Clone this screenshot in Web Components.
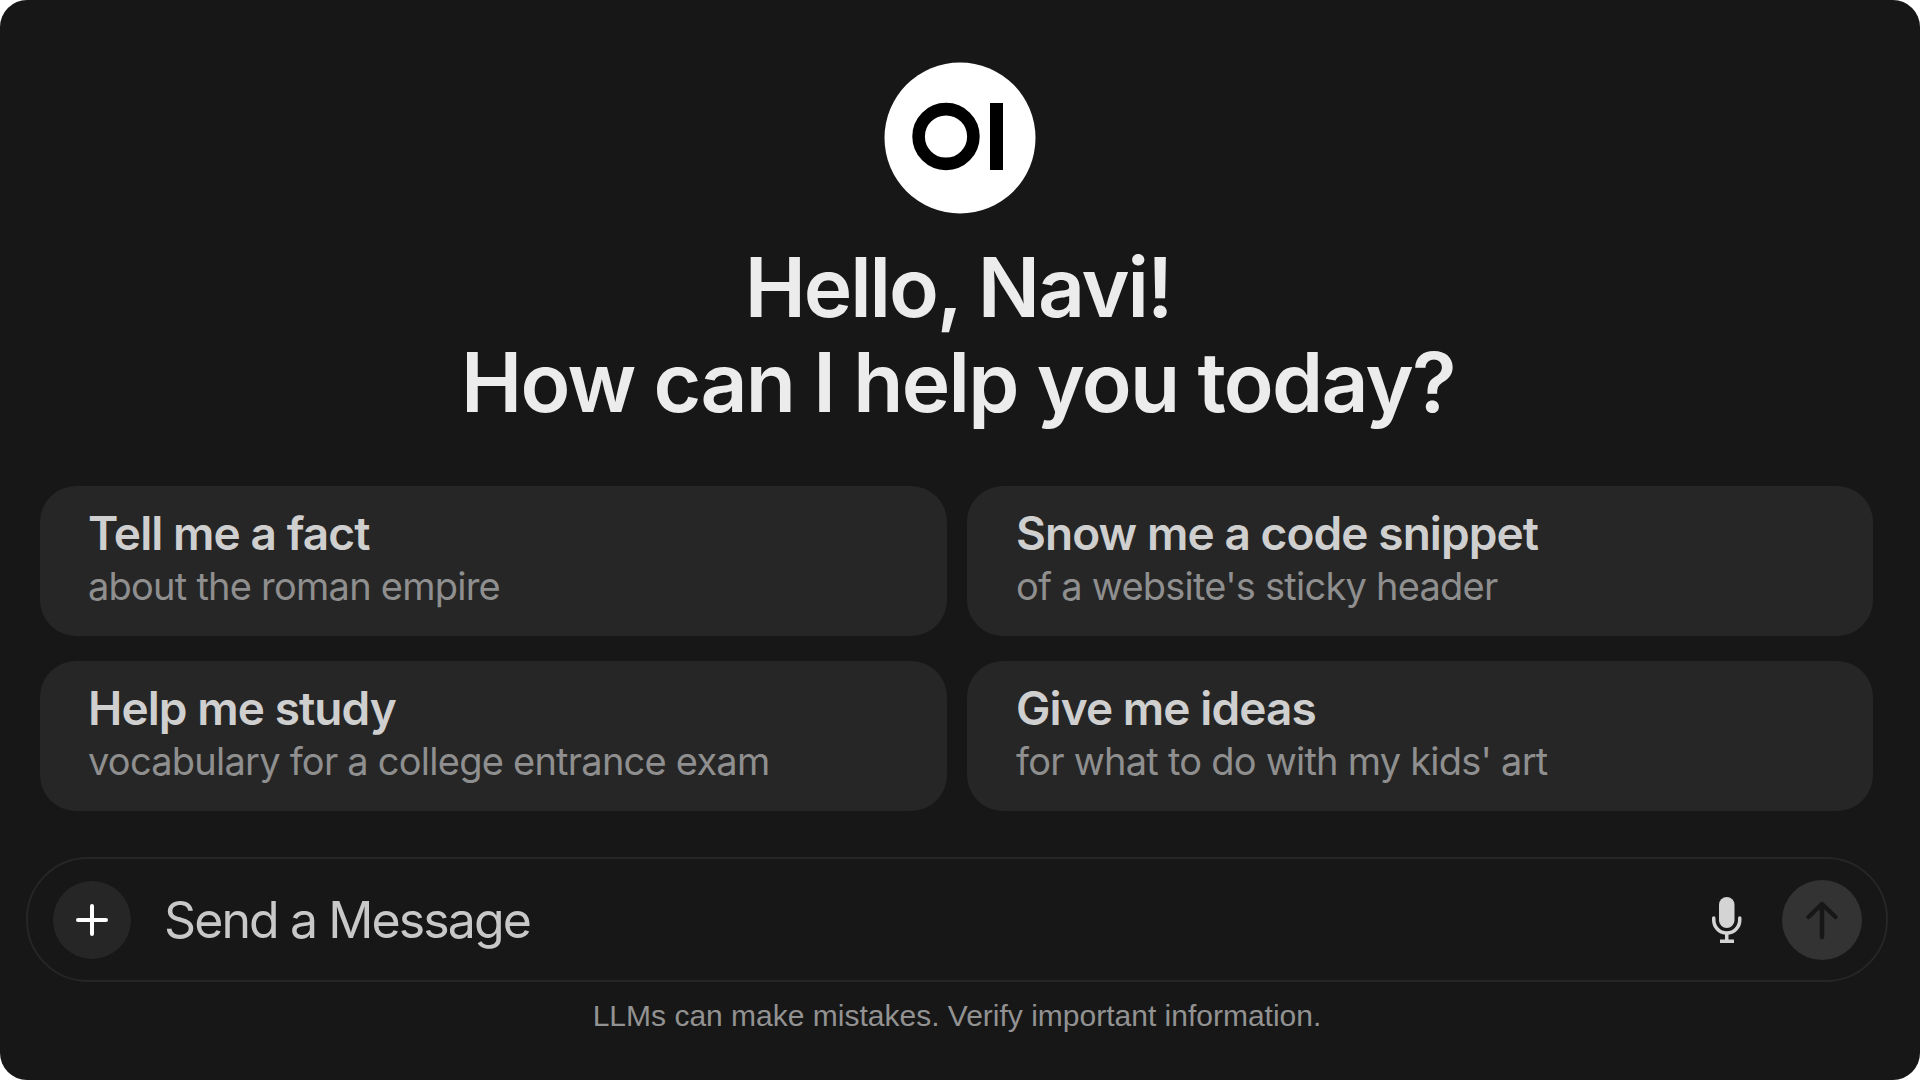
<!DOCTYPE html>
<html lang="en">
<head>
<meta charset="utf-8">
<title>Open WebUI</title>
<style>
  html, body { margin: 0; height: 100%; background: #fff; }
</style>
</head>
<body>
<chat-app>
  <oi-logo></oi-logo>
  <chat-greeting>
    <span>Hello, Navi!</span>
    <span>How can I help you today?</span>
  </chat-greeting>
  <prompt-grid>
    <prompt-card title="Tell me a fact" sub="about the roman empire"></prompt-card>
    <prompt-card title="Snow me a code snippet" sub="of a website's sticky header"></prompt-card>
    <prompt-card title="Help me study" sub="vocabulary for a college entrance exam"></prompt-card>
    <prompt-card title="Give me ideas" sub="for what to do with my kids' art"></prompt-card>
  </prompt-grid>
  <message-bar placeholder="Send a Message"></message-bar>
  <chat-disclaimer>LLMs can make mistakes. Verify important information.</chat-disclaimer>
</chat-app>
<script>
(function () {
  function define(name, css, html, onConnect) {
    customElements.define(name, class extends HTMLElement {
      constructor() {
        super();
        this.attachShadow({ mode: 'open' }).innerHTML = `<style>${css}</style>${html}`;
      }
      connectedCallback() { if (onConnect) onConnect(this); }
    });
  }

  define('chat-app', `
    :host{
      display:flex; flex-direction:column; align-items:stretch;
      box-sizing:border-box; width:1920px; height:1080px;
      padding-top:62px; overflow:hidden;
      background:#171717; border-radius:27px;
      font-family:Inter, "Liberation Sans", sans-serif;
    }
  `, `<slot></slot>`);

  define('oi-logo', `
    :host{ display:flex; justify-content:center; }
    svg{ display:block; }
  `, `<svg width="152" height="152" viewBox="0 0 152 152" aria-hidden="true">
      <circle cx="76" cy="76" r="75.5" fill="#fff"/>
      <circle cx="62" cy="74.5" r="27.4" fill="none" stroke="#000" stroke-width="12.6"/>
      <rect x="106" y="41" width="13" height="67" fill="#000"/>
    </svg>`);

  define('chat-greeting', `
    :host{
      display:flex; flex-direction:column; align-items:center;
      margin-top:26px; margin-left:-4px;
      font-size:82px; line-height:95px; font-weight:600; letter-spacing:-1.7px; color:#ececec;
    }
    ::slotted(span){ display:block; }
    ::slotted(span:first-child){ letter-spacing:-2.1px; }
  `, `<slot></slot>`);

  define('prompt-grid', `
    :host{
      display:grid; grid-template-columns:907px 906px; column-gap:20px; row-gap:25px;
      margin:56px 0 0 40px;
    }
    ::slotted(prompt-card:nth-child(even)){ --card-pad:49px; }
  `, `<slot></slot>`);

  define('prompt-card', `
    :host{
      display:flex; flex-direction:column; box-sizing:border-box; height:150px;
      padding:20px 48px 0 var(--card-pad, 48px); background:#262626; border-radius:36px;
    }
    .title{ font-size:46px; line-height:54px; font-weight:600; letter-spacing:-.92px; color:#cfcfcf; }
    .sub{ font-size:38px; line-height:52px; letter-spacing:-.76px; color:#8f8f8f; }
  `, `<div class="title"></div><div class="sub"></div>`, function (el) {
    el.shadowRoot.querySelector('.title').textContent = el.getAttribute('title');
    el.shadowRoot.querySelector('.sub').textContent = el.getAttribute('sub');
    el.removeAttribute('title');
  });

  define('message-bar', `
    :host{
      display:flex; align-items:center; box-sizing:border-box;
      height:125px; margin:46px 32px 0 26px; padding:0 24px 0 25px;
      border:2px solid #262626; border-radius:62px;
    }
    .plus{
      display:flex; align-items:center; justify-content:center; flex:none;
      width:78px; height:78px; border-radius:50%; background:#262626;
    }
    .text{ flex:1; margin-left:33px; font-size:50px; font-weight:400; letter-spacing:-1.9px; color:#c8c8c8; }
    .mic{ display:block; flex:none; margin-right:40px; }
    .send{
      display:flex; align-items:center; justify-content:center; flex:none;
      width:80px; height:80px; border-radius:50%; background:#333;
    }
  `, `
    <div class="plus">
      <svg width="34" height="34" viewBox="0 0 34 34" aria-hidden="true">
        <path d="M17 3v28M3 17h28" stroke="#fff" stroke-width="4" stroke-linecap="round"/>
      </svg>
    </div>
    <div class="text"></div>
    <svg class="mic" width="30" height="46" viewBox="0 0 30 46" aria-hidden="true">
      <rect x="7" y="0" width="15.5" height="31" rx="7.75" fill="#d4d4d4"/>
      <path d="M1.75 21v2a13 13 0 0 0 26 0v-2" fill="none" stroke="#d4d4d4" stroke-width="3.5" stroke-linecap="round"/>
      <path d="M14.75 36v8M8 44.25h14" fill="none" stroke="#d4d4d4" stroke-width="3.5"/>
    </svg>
    <div class="send">
      <svg width="36" height="40" viewBox="0 0 36 40" aria-hidden="true">
        <path d="M18 37V4M4.5 17 18 4l13.5 13" fill="none" stroke="#171717" stroke-width="4.5" stroke-linecap="round" stroke-linejoin="round"/>
      </svg>
    </div>
  `, function (el) {
    el.shadowRoot.querySelector('.text').textContent = el.getAttribute('placeholder');
  });

  define('chat-disclaimer', `
    :host{
      display:block; margin:17px 0 0 -6px; text-align:center;
      font-family:"Liberation Sans", Arial, sans-serif;
      font-size:30px; line-height:34px; color:#929292;
    }
  `, `<slot></slot>`);
})();
</script>
</body>
</html>
